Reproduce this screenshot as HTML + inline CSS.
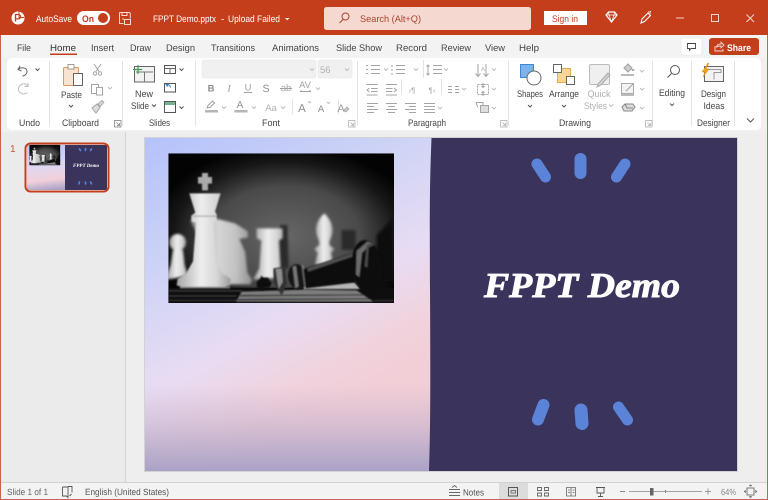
<!DOCTYPE html>
<html lang="en"><head><meta charset="utf-8"><title>FPPT Demo.pptx - PowerPoint</title>
<style>
html,body{margin:0;padding:0;width:768px;height:500px;overflow:hidden;background:#ececec}
svg{display:block;position:absolute;left:0;top:0;filter:blur(.3px)}
text{font-family:"Liberation Sans",sans-serif;font-size:9.5px;fill:#444;text-rendering:geometricPrecision}
.c{text-anchor:middle}
.g{fill:#b0b0b0}
.w{fill:#fff}
.ic{fill:none;stroke:#a5a5a5;stroke-width:1}
.dk{fill:none;stroke:#666;stroke-width:1}
.ch{fill:none;stroke:#555;stroke-width:1}
.cg{fill:none;stroke:#bdbdbd;stroke-width:1}
</style></head><body>
<svg width="768" height="500" viewBox="0 0 768 500" xmlns="http://www.w3.org/2000/svg">
<defs>
<linearGradient id="bg" gradientUnits="userSpaceOnUse" x1="145" y1="138" x2="300" y2="430">
<stop offset="0" stop-color="#b5c2fb"/><stop offset=".36" stop-color="#cdd3f6"/><stop offset=".68" stop-color="#e8dcf3"/><stop offset=".88" stop-color="#f1d2dc"/><stop offset="1" stop-color="#f2ced6"/>
</linearGradient>
<linearGradient id="bot" gradientUnits="userSpaceOnUse" x1="0" y1="385" x2="0" y2="471">
<stop offset="0" stop-color="#aaa2c7" stop-opacity="0"/><stop offset=".45" stop-color="#aaa2c7" stop-opacity=".35"/><stop offset=".8" stop-color="#aaa2c7" stop-opacity=".75"/><stop offset="1" stop-color="#aaa2c7"/>
</linearGradient>
<linearGradient id="thumb" x1=".1" y1="0" x2=".3" y2="1">
<stop offset="0" stop-color="#b7c4fb"/><stop offset=".45" stop-color="#dcd8f2"/><stop offset=".78" stop-color="#f1d0da"/><stop offset="1" stop-color="#aaa2c7"/>
</linearGradient>
<radialGradient id="vig" cx=".52" cy=".55" r=".6">
<stop offset="0" stop-color="#666"/><stop offset=".55" stop-color="#4a4a4a"/><stop offset=".82" stop-color="#171717"/><stop offset="1" stop-color="#030303"/>
</radialGradient>
<linearGradient id="wp" x1="0" x2="1" y1="0" y2="0"><stop offset="0" stop-color="#a5a5a5"/><stop offset=".45" stop-color="#eeeeee"/><stop offset=".75" stop-color="#d5d5d5"/><stop offset="1" stop-color="#9a9a9a"/></linearGradient>
<filter id="b1" x="-20%" y="-20%" width="140%" height="140%"><feGaussianBlur stdDeviation="2"/></filter>
<filter id="b2" x="-20%" y="-20%" width="140%" height="140%"><feGaussianBlur stdDeviation="4"/></filter>
<clipPath id="imgc"><rect x="25" y="25" width="677" height="449"/></clipPath>
<g id="chess">
<g clip-path="url(#imgc)">
<rect x="25" y="25" width="677" height="449" fill="url(#vig)"/>
<rect x="25" y="428" width="677" height="46" fill="#0e0e0e"/>
<g filter="url(#b2)">
<path d="M545 255h42v60h-42z" fill="#2a2a2a"/>
<path d="M650 270l50-50v190h-50z" fill="#111"/>
<path d="M360 240h22l4 130h-30z" fill="#2a2a2a"/>
</g>
<g filter="url(#b2)" fill="url(#wp)">
<circle cx="53" cy="292" r="25"/>
<path d="M39 315h30l5 45 10 32-62 12-2-12 12-32z"/>
<path d="M290 250h78v30l-12 6 6 85 14 26-96 6 18-32 6-85-14-6z"/>
<path d="M493 205c17 16 27 36 24 58-2 16-12 24-8 38l12 8v8l-8 5 8 38h-56l8-38-8-5v-8l12-8c4-14-6-22-8-38-3-22 6-42 24-58z"/>
<path d="M185 225l40 10 38 24 1 18-26 5 18 40 6 60 14 22-4 14h-80l-35-60-65-130 20-20z" opacity=".85"/>
</g>
<g filter="url(#b1)">
<path d="M440 412l140-2 20 22H430z" fill="#b5b5b5"/>
<path d="M245 440l185-6 160 2 50 34H228z" fill="#7d7d7d"/>
<path d="M240 450l370-2v3l-370 3zM232 462l400-2v3l-400 3z" fill="#1a1a1a"/>
<path d="M25 452h205v2H25zM25 465h205v2H25zM640 466h62v2h-62z" fill="#999" opacity=".55"/>
<path d="M25 436h220v3H25z" fill="#888" opacity=".5"/>
</g>
<g filter="url(#b1)">
<path d="M126 84h18v12h12v20h-12v20h-18v-20h-12v-20h12z" fill="#aaa"/>
<path d="M88 145h94l-17 55 5 8v20l-9 6 7 115 20 38 24 14-2 20-30 8H75l-25-8 3-20 24-14 22-38 9-115-14-6v-16l12-9z" fill="url(#wp)"/>
<rect x="98" y="212" width="74" height="3" fill="#999"/>
<rect x="60" y="425" width="150" height="5" fill="#8a8a8a"/>
</g>
<g>
<g filter="url(#b1)">
<path d="M290 410l10-8 4-10 6 6 14 0 6 10 6 6-8 14-14 0-6 10-8-8-10-2z" fill="#101010"/>
<path d="M340 370l36-6 5 52-16 36-12-20-12-18z" fill="#303030"/>
<path d="M347 372l18-1 3 40-12 20z" fill="#8f8f8f"/>
<ellipse cx="412" cy="395" rx="28" ry="38" transform="rotate(-10 412 395)" fill="#141414"/>
<path d="M398 365l10-3 8 62-10 6zM425 360l6-1 8 58-6 6z" fill="#777"/>
<path d="M430 372l145-48 12 88-150 18z" fill="#0a0a0a"/>
<path d="M442 370l133-44 4 8-135 46z" fill="#505050"/>
<ellipse cx="622" cy="365" rx="46" ry="80" transform="rotate(-8 622 365)" fill="#0a0a0a"/>
<path d="M590 318l32-28 14 4-30 30-8 72-10-8z" fill="#6b6b6b"/>
<path d="M620 300l16-6 6 6-16 8-4 60-8-4z" fill="#484848"/>
</g>
</g>
</g>
</g>
</defs>

<!-- window chrome -->
<rect width="768" height="500" fill="#ececec"/>
<rect width="768" height="35" fill="#c43e1c"/>
<rect y="35" width="768" height="23" fill="#f3f3f3"/>
<rect x="0" y="58" width="768" height="74" fill="#f0f0f0"/>
<rect x="7" y="58" width="754" height="72" rx="5" fill="#fff"/>

<!-- title bar -->
<circle cx="18" cy="18" r="6.5" fill="#fff"/>
<path d="M15.500 21.500v-7h2.800a2 2 0 0 1 0 4.400h-2.800" fill="none" stroke="#c43e1c" stroke-width="1.300"/>
<path d="M19 11.500v6h5" fill="none" stroke="#c43e1c" stroke-width=".9"/>
<text x="36" y="22" class="w" textLength="36" lengthAdjust="spacingAndGlyphs">AutoSave</text>
<rect x="77" y="11" width="33" height="14" rx="7" fill="#fff"/>
<text x="82" y="22" textLength="12" lengthAdjust="spacingAndGlyphs" style="font-weight:bold;fill:#c43e1c">On</text>
<circle cx="103" cy="18" r="5" fill="#c43e1c"/>
<path d="M119.500 12.500h10l.8.800v5.200M119.500 12.500v11h4M122 12.500v3h5v-3M122 19h2" fill="none" stroke="#f6d9d0" stroke-width="1"/>
<rect x="124.500" y="19.500" width="6" height="5" fill="none" stroke="#f6d9d0"/>
<text x="153" y="22" class="w" textLength="63" lengthAdjust="spacingAndGlyphs">FPPT Demo.pptx</text>
<text x="221" y="22" class="w">-</text>
<text x="228" y="22" class="w" textLength="52" lengthAdjust="spacingAndGlyphs">Upload Failed</text>
<path d="M285 18h4.500l-2.200 2.300z" fill="#fff"/>
<rect x="324" y="7" width="207" height="23" rx="2.500" fill="#f5d8d0"/>
<circle cx="345.500" cy="16.500" r="3.500" fill="none" stroke="#a8452c"/>
<path d="M343 19.500l-3.500 3.500" stroke="#a8452c" fill="none"/>
<text x="360" y="22" textLength="61" lengthAdjust="spacingAndGlyphs" style="fill:#a5452f">Search (Alt+Q)</text>
<rect x="544" y="11" width="43" height="14" fill="#fff"/>
<text x="565" y="22" class="c" textLength="26" lengthAdjust="spacingAndGlyphs" style="fill:#c43e1c">Sign in</text>
<path d="M606 15l2.500-3h6l2.500 3-5.500 7z" fill="none" stroke="#fff" stroke-width="1.200"/>
<path d="M606 15h11M609 15l2.500 7 2.500-7M608.500 12l.5 3M614.500 12l-.5 3" fill="none" stroke="#fff" stroke-width=".7"/>
<path d="M641 23l1-4 6-6 2.500 2.500-6 6z" fill="none" stroke="#fff" stroke-width="1.100"/>
<path d="M649 11v2M651 13h-1.500M651 11l-1 1" stroke="#fff" stroke-width=".8"/>
<path d="M676 18h8" stroke="#f5cfc4" stroke-width="1"/>
<rect x="711.500" y="14.500" width="7" height="7" fill="none" stroke="#f5d5cc"/>
<path d="M746.500 14.500l7.500 7.500M754 14.500l-7.500 7.500" stroke="#f5d5cc" stroke-width="1" fill="none"/>

<!-- tabs -->
<text x="17" y="51" textLength="14" lengthAdjust="spacingAndGlyphs">File</text>
<text x="50" y="51" textLength="26" lengthAdjust="spacingAndGlyphs" style="fill:#333">Home</text>
<rect x="50" y="53.500" width="27" height="1.500" fill="#c43e1c"/>
<text x="91" y="51" textLength="23" lengthAdjust="spacingAndGlyphs">Insert</text>
<text x="130" y="51" textLength="21" lengthAdjust="spacingAndGlyphs">Draw</text>
<text x="166" y="51" textLength="29" lengthAdjust="spacingAndGlyphs">Design</text>
<text x="211" y="51" textLength="44" lengthAdjust="spacingAndGlyphs">Transitions</text>
<text x="272" y="51" textLength="47" lengthAdjust="spacingAndGlyphs">Animations</text>
<text x="336" y="51" textLength="46" lengthAdjust="spacingAndGlyphs">Slide Show</text>
<text x="396" y="51" textLength="31" lengthAdjust="spacingAndGlyphs">Record</text>
<text x="441" y="51" textLength="30" lengthAdjust="spacingAndGlyphs">Review</text>
<text x="485" y="51" textLength="20" lengthAdjust="spacingAndGlyphs">View</text>
<text x="519" y="51" textLength="20" lengthAdjust="spacingAndGlyphs">Help</text>
<rect x="681" y="38" width="21" height="17" rx="2" fill="#fff" stroke="#e3e3e3" stroke-width=".6"/>
<path d="M687.500 43.500h8v5h-4.500l-1.500 1.800v-1.800h-2z" fill="none" stroke="#444" stroke-width=".9"/>
<rect x="709" y="38" width="50" height="17" rx="3" fill="#c43e1c"/>
<path d="M715 46v5h8v-2M716.500 47c.5-2 2-3 4.500-3v-1.800l3 2.800-3 2.800v-1.800c-2 0-3.500 .3-4.500 1z" fill="none" stroke="#f7d9d1" stroke-width=".9"/>
<text x="727" y="51" class="w" textLength="24" lengthAdjust="spacingAndGlyphs" style="font-weight:bold">Share</text>

<!-- ribbon separators -->
<g stroke="#e3e3e3" stroke-width="1">
<path d="M49.500 61v65M122.500 61v65M195.500 61v65M357.500 61v65M508.500 61v65M652.500 61v65M691.500 61v65M734.500 61v65"/>
<path d="M292.500 99v15M338.500 99v15M423.500 60v18M401.500 79v15M441.500 79v15"/>
</g>

<!-- undo group -->
<path d="M20 66l-2 3.500 3.500 1.500M18.500 69.300c2-2 8-2.500 8.500 1.800.3 2.700-1.800 4.400-4.500 5" class="dk"/>
<path d="M35.500 68.500l2 2 2-2" class="ch"/>
<path d="M28 83v3.500h-3.500M27.500 85.500c-3-3.500-9-1-9 3.500s5.500 6.500 9 3.500" class="cg"/>
<text x="29.500" y="126" class="c" textLength="21" lengthAdjust="spacingAndGlyphs">Undo</text>

<!-- clipboard -->
<rect x="63.500" y="67.500" width="15" height="18" rx="1" fill="#f7e3cf" stroke="#d99a5c"/>
<rect x="68" y="64.500" width="6" height="4.500" fill="#fff" stroke="#888" stroke-width=".8"/>
<rect x="73.500" y="73.500" width="9" height="12" fill="#fff" stroke="#666"/>
<text x="71.500" y="98" class="c" textLength="21" lengthAdjust="spacingAndGlyphs">Paste</text>
<path d="M69 105l2 2 2-2" class="ch"/>
<path d="M94 64l5 7.500M101 64l-5 7.500" class="ic"/><circle cx="95" cy="73.500" r="1.700" class="ic"/><circle cx="100" cy="73.500" r="1.700" class="ic"/>
<rect x="91.500" y="84.500" width="7" height="9" class="ic"/><rect x="96.500" y="87.500" width="6" height="7.500" fill="#fff" stroke="#a5a5a5"/>
<path d="M108 87l2 2 2-2" class="cg"/>
<path d="M92 108l5-4 3 3.500-4 5.500zM98 104l4-3.500 1.800 1.800-3.500 4z" fill="#ddd" stroke="#a5a5a5"/>
<text x="80.500" y="126" class="c" textLength="37" lengthAdjust="spacingAndGlyphs">Clipboard</text>
<path d="M114.500 120.500h6.500v6.500h-6.500zM116.500 122.500l3 3M119.500 123v2.500h-2.500" fill="none" stroke="#777" stroke-width=".7"/>

<!-- slides -->
<rect x="134.500" y="66.500" width="20" height="15.500" fill="#f2f2f2" stroke="#666"/>
<path d="M136 72h17M144.500 72v10" stroke="#777" fill="none"/>
<path d="M138 65v9M133 69.500h9" stroke="#3d9b55" stroke-width="1.200"/>
<text x="144" y="97" class="c" textLength="18" lengthAdjust="spacingAndGlyphs">New</text>
<text x="140" y="109" class="c" textLength="18" lengthAdjust="spacingAndGlyphs">Slide</text>
<path d="M152 104.500l2 2 2-2" class="ch"/>
<rect x="164.500" y="65.500" width="11" height="8" fill="#fff" stroke="#555"/><path d="M165 68.500h10M170 68.500v5" stroke="#666"/>
<path d="M179.500 68.500l2 2 2-2" class="ch"/>
<rect x="164.500" y="83.500" width="11" height="8.500" fill="#fff" stroke="#555"/><path d="M166 85c2-1 4 0 4.500 2.500" stroke="#2b78c5" fill="none"/><path d="M165 83.500l2.500 3.500 1-3z" fill="#2b78c5"/>
<rect x="164.500" y="101.500" width="11" height="11" fill="#fff" stroke="#555"/><rect x="165" y="102" width="10" height="3" fill="#74b58c"/>
<path d="M179.500 106.500l2 2 2-2" class="ch"/>
<text x="159.500" y="126" class="c" textLength="21" lengthAdjust="spacingAndGlyphs">Slides</text>

<!-- font -->
<rect x="202" y="60" width="114" height="18" rx="2" fill="#f0f0f0" stroke="#e6e6e6" stroke-width=".6"/>
<path d="M310 68.500l2 2 2-2" class="cg"/>
<rect x="318" y="60" width="34" height="18" rx="2" fill="#f0f0f0" stroke="#e6e6e6" stroke-width=".6"/>
<text x="320" y="73" class="g">56</text>
<path d="M345 68.500l2 2 2-2" class="cg"/>
<text x="211" y="91.500" class="c" style="font-weight:bold;fill:#8d8d8d">B</text>
<text x="229" y="91.500" class="c" style="font-family:'Liberation Serif',serif;font-style:italic;fill:#999;font-size:10px">I</text>
<text x="248" y="90.500" class="c" style="fill:#a0a0a0">U</text><path d="M244 92.500h8" stroke="#a0a0a0"/>
<text x="266" y="92" class="c" style="fill:#8d8d8d;font-size:10.500px">S</text>
<text x="286" y="91" class="c" style="fill:#aaa">ab</text><path d="M280 88.500h12" stroke="#a0a0a0"/>
<text x="305" y="88" class="c" style="fill:#a0a0a0">AV</text><path d="M300 91.500h11M300 91.500l1.500-1M311 91.500l-1.500-1" stroke="#a0a0a0" fill="none"/>
<path d="M316 87.500l2 2 2-2" class="cg"/>
<path d="M207 108l1-2.500 4.500-4.500 2 2-4.500 4.500z" fill="none" stroke="#a0a0a0"/><rect x="205" y="110" width="13" height="2.500" fill="#b5b5b5"/>
<path d="M222 106.500l2 2 2-2" class="cg"/>
<text x="240" y="108" class="c" style="fill:#8d8d8d;font-size:10px">A</text><rect x="234.500" y="110" width="13" height="2.500" fill="#b5b5b5"/>
<path d="M252 106.500l2 2 2-2" class="cg"/>
<text x="271" y="111" class="c g">Aa</text>
<path d="M281 106.500l2 2 2-2" class="cg"/>
<text x="302" y="112" class="c" style="fill:#8d8d8d;font-size:11.500px">A</text><path d="M308 103l1.500-1.500 1.500 1.500" class="cg"/>
<text x="321" y="112" class="c" style="fill:#8d8d8d">A</text><path d="M327 102l1.500 1.500 1.500-1.500" class="cg"/>
<text x="341" y="112" class="c" style="fill:#a0a0a0;font-size:11px">A</text><path d="M344 110l3-3 2 2-3 3z" fill="#ccc" stroke="#a0a0a0" stroke-width=".7"/>
<text x="271" y="126" class="c" textLength="18" lengthAdjust="spacingAndGlyphs">Font</text>
<path d="M348.500 120.500h6.500v6.500h-6.500zM350.500 122.500l3 3M353.500 123v2.500h-2.500" fill="none" stroke="#aaa" stroke-width=".7"/>

<!-- paragraph -->
<g class="ic">
<path d="M371 65.500h9M371 69.500h9M371 73.500h9M366 65.500h2M366 69.500h2M366 73.500h2"/>
<path d="M391 66h2M391 70h2M391 74h2M396 65.500h9M396 69.500h9M396 73.500h9"/>
<path d="M428 65v10M426.500 66.500l1.500-1.500 1.500 1.500M426.500 73.500l1.500 1.500 1.500-1.500M433 65.500h9M433 69.500h9M433 73.500h9"/>
<path d="M366.500 84.500h11M371 88.500h6.500M371 91.500h6.500M366.500 95h11M369.500 88l-2.500 2 2.500 2"/>
<path d="M386 84.500h11M386 88.500h6.500M386 91.500h6.500M386 95h11M394 88l2.500 2-2.500 2"/>
<path d="M448 86.500h4M448 89.500h4M448 92.500h4M455 86.500h4M455 89.500h4M455 92.500h4"/>
<path d="M367 103.500h11M367 106.500h7M367 109.500h11M367 112.500h7"/>
<path d="M386 103.500h11M388 106.500h7M386 109.500h11M388 112.500h7"/>
<path d="M405 103.500h11M409 106.500h7M405 109.500h11M409 112.500h7"/>
<path d="M424 103.500h11M424 106.500h11M424 109.500h11M424 112.500h11"/>
<path d="M478 64v12M475.500 73.500l2.500 3 2.500-3M486 64v12M483.500 73.500l2.500 3 2.500-3"/>
<rect x="477.500" y="84.500" width="11" height="10" stroke-dasharray="2 1"/>
<path d="M483 83v4M483 92v4M481.500 86l1.500 1.500 1.500-1.500M481.500 93l1.500-1.500 1.500 1.500"/>
<rect x="480.500" y="105.500" width="8" height="7" fill="#ddd"/>
<path d="M476 102.500h7v3M476 102.500l2 5"/>
</g>
<text x="483" y="71" class="c" style="fill:#aaa;font-size:6px">A</text>
<text x="412" y="93" class="c" style="fill:#aaa;font-size:8px">›¶</text>
<text x="432" y="93" class="c" style="fill:#aaa;font-size:8px">¶‹</text>
<g class="cg">
<path d="M384 68.500l2 2 2-2"/><path d="M414 68.500l2 2 2-2"/><path d="M444 68.500l2 2 2-2"/><path d="M492 68.500l2 2 2-2"/><path d="M462 88l2 2 2-2"/><path d="M492 88l2 2 2-2"/><path d="M438 107l2 2 2-2"/><path d="M492 107l2 2 2-2"/>
</g>
<text x="427" y="126" class="c" textLength="38" lengthAdjust="spacingAndGlyphs">Paragraph</text>
<path d="M500.500 120.500h6.500v6.500h-6.500zM502.500 122.500l3 3M505.500 123v2.500h-2.500" fill="none" stroke="#aaa" stroke-width=".7"/>

<!-- drawing -->
<rect x="520.500" y="64.500" width="13" height="13" fill="#7fb2ec" stroke="#3f86d4"/>
<circle cx="534" cy="78" r="7" fill="#fff" stroke="#666"/>
<text x="530" y="97" class="c" textLength="26" lengthAdjust="spacingAndGlyphs">Shapes</text>
<path d="M528 105l2 2 2-2" class="ch"/>
<rect x="557.500" y="68.500" width="13" height="14" fill="#f9d693" stroke="#e8a84a"/>
<rect x="553.500" y="64.500" width="8" height="8" fill="#fff" stroke="#666"/>
<rect x="566.500" y="76.500" width="8" height="8" fill="#fff" stroke="#666"/>
<text x="564" y="97" class="c" textLength="30" lengthAdjust="spacingAndGlyphs">Arrange</text>
<path d="M562 105l2 2 2-2" class="ch"/>
<rect x="589.500" y="64.500" width="20" height="20" rx="1.500" fill="#efefef" stroke="#bbb"/>
<path d="M598 84l10-11 2 2-9 10-4 2z" fill="#d4d4d4" stroke="#aaa"/>
<text x="599" y="97" class="c g" textLength="23" lengthAdjust="spacingAndGlyphs">Quick</text>
<text x="595.500" y="109" class="c g" textLength="23" lengthAdjust="spacingAndGlyphs">Styles</text>
<path d="M609 104.500l2 2 2-2" class="cg"/>
<path d="M624 68l4-4 4 4-4 4zM634 69c0 2-2 2-2 0" fill="#ccc" stroke="#a0a0a0"/><rect x="621" y="74" width="13" height="2" fill="#bbb"/>
<path d="M640 70l2 2 2-2" class="cg"/>
<rect x="621.500" y="83.500" width="12" height="10" fill="#f3f3f3" stroke="#aaa"/><path d="M626 91l7-7" stroke="#a0a0a0"/><rect x="621" y="94" width="13" height="2" fill="#bbb"/>
<path d="M640 88l2 2 2-2" class="cg"/>
<path d="M622 107l3-3h8l2 3-3 4h-8z" fill="#ddd" stroke="#888"/><path d="M625 104l2 4h6" stroke="#888" fill="none"/>
<path d="M640 107l2 2 2-2" class="cg"/>
<text x="575" y="126" class="c" textLength="32" lengthAdjust="spacingAndGlyphs">Drawing</text>
<path d="M645.500 120.500h6.500v6.500h-6.500zM647.500 122.500l3 3M650.500 123v2.500h-2.500" fill="none" stroke="#aaa" stroke-width=".7"/>

<!-- editing -->
<circle cx="675" cy="70" r="4.500" fill="none" stroke="#555"/>
<path d="M671.500 73.500l-4 4" stroke="#555" fill="none"/>
<text x="672" y="96" class="c" textLength="26" lengthAdjust="spacingAndGlyphs">Editing</text>
<path d="M670 103.500l2 2 2-2" class="ch"/>

<!-- designer -->
<rect x="704.500" y="66.500" width="19" height="15" fill="#f3f3f3" stroke="#666"/>
<path d="M707 69.500h14v3h-7v7" fill="none" stroke="#999"/>
<path d="M708 63l-6 9h3l-2 5 6-8h-3l3-6z" fill="#f0a323" stroke="#e08c10" stroke-width=".5"/>
<text x="713.500" y="97" class="c" textLength="25" lengthAdjust="spacingAndGlyphs">Design</text>
<text x="714" y="109" class="c" textLength="21" lengthAdjust="spacingAndGlyphs">Ideas</text>
<text x="713.500" y="126" class="c" textLength="33" lengthAdjust="spacingAndGlyphs">Designer</text>
<path d="M747 118.500l3.500 3.500 3.500-3.500" class="ch"/>

<!-- panes -->
<rect x="0" y="132" width="125" height="351" fill="#ebebeb"/>
<rect x="125" y="132" width="1" height="351" fill="#d4d4d4"/>
<rect x="126" y="132" width="642" height="351" fill="#eeeeee"/>

<!-- thumbnail -->
<text x="10" y="152" style="font-size:10px;fill:#c9573a">1</text>
<rect x="25.500" y="143.500" width="83" height="48" rx="5" fill="#fff"/>
<rect x="27" y="145" width="80" height="45" fill="url(#thumb)"/>
<rect x="65" y="145" width="42" height="45" fill="#3a345c"/>
<use href="#chess" transform="translate(28.200 143.600) scale(.0457)"/>
<text x="86" y="167" class="c" textLength="26" lengthAdjust="spacingAndGlyphs" style="font-family:'Liberation Serif',serif;font-weight:bold;font-style:italic;font-size:5px;fill:#fff">FPPT Demo</text>
<g stroke="#5b84d9" stroke-width="1.600" stroke-linecap="round" fill="none">
<path d="M79.500 149l1 1.500M85.500 148.500v2M91.500 149l-1 1.500M79.500 182l-.7 1.800M85.500 182v2M90.500 182l1 1.800"/>
</g>
<rect x="25.500" y="143.500" width="83" height="48" rx="5" fill="none" stroke="#c43e1c" stroke-width="2"/>

<!-- slide -->
<rect x="144.500" y="137.500" width="593" height="334" fill="none" stroke="#d2d2d2"/>
<rect x="145" y="138" width="592" height="333" fill="url(#bg)"/>
<rect x="145" y="385" width="592" height="86" fill="url(#bot)"/>
<path d="M431.500 138c-1.500 40 -2 60 -1.500 150s.5 140 -1 183H737V138z" fill="#3a345c"/>
<use href="#chess" transform="translate(160 145) scale(.33333)"/>
<g stroke="#5b84d9" stroke-linecap="round" fill="none">
<path d="M537 164l8.500 13" stroke-width="11"/>
<path d="M580.500 159v14" stroke-width="12"/>
<path d="M625 164l-8.500 13" stroke-width="11"/>
<path d="M543.500 405l-5.500 14.500" stroke-width="12"/>
<path d="M581 410l1 13.500" stroke-width="13"/>
<path d="M618.500 407l9 13" stroke-width="11"/>
</g>
<text x="484" y="297" textLength="196" lengthAdjust="spacingAndGlyphs" style="font-family:'Liberation Serif',serif;font-weight:bold;font-style:italic;font-size:35px;fill:#fff;stroke:#fff;stroke-width:.9px">FPPT Demo</text>

<!-- status bar -->
<rect x="0" y="482" width="768" height="1" fill="#d2d2d2"/>
<rect x="0" y="483" width="768" height="16" fill="#f3f3f3"/>
<text x="7" y="495" textLength="41" lengthAdjust="spacingAndGlyphs" style="font-size:9px;fill:#666">Slide 1 of 1</text>
<path d="M62.500 487v9h4l1.500 1.500v-10.500h-5.500M68 486.500h4v6M71.500 494l-2 2" fill="none" stroke="#555" stroke-width=".9"/>
<text x="85" y="495" textLength="84" lengthAdjust="spacingAndGlyphs" style="font-size:9px;fill:#555">English (United States)</text>
<path d="M449 489.500h11M449 492.500h11M449 495.500h11M452 487.500l2.500-2 2.500 2" fill="none" stroke="#666" stroke-width=".9"/>
<text x="463" y="495.500" textLength="21" lengthAdjust="spacingAndGlyphs" style="font-size:9px;fill:#555">Notes</text>
<rect x="499" y="483" width="29" height="16" fill="#dcdcdc"/>
<rect x="508.500" y="487.500" width="9" height="8.500" fill="none" stroke="#555"/>
<path d="M511 490.500h4.500v2.500h-4.500z" fill="none" stroke="#555" stroke-width=".7"/>
<path d="M537.500 487.500h4v3h-4zM544.500 487.500h4v3h-4zM537.500 493h4v3h-4zM544.500 493h4v3h-4z" fill="none" stroke="#666" stroke-width=".9"/>
<path d="M566.500 487.500h4.500v8.500h-4.500zM571 487.500h4.500v8.500H571zM568 490h2M568 492.500h2M572.500 490h2M572.500 492.500h2" fill="none" stroke="#666" stroke-width=".8"/>
<path d="M596 487.500h9M597 487.500v5.500h7v-5.500M600.500 493v3M598 496.500h5" fill="none" stroke="#555" stroke-width=".9"/>
<path d="M620 491.500h5" stroke="#888"/>
<path d="M629 491.500h73" stroke="#888" stroke-width=".8"/>
<rect x="650" y="488" width="3.500" height="7.500" fill="#666"/>
<path d="M665.500 490v3" stroke="#888"/>
<path d="M705 491.500h6M708 488.500v6" stroke="#999"/>
<text x="721" y="495" textLength="15" lengthAdjust="spacingAndGlyphs" style="font-size:9px;fill:#888">64%</text>
<rect x="747" y="488" width="7" height="7" fill="none" stroke="#777"/>
<path d="M750.500 484.500l-1.500 1.500h3zM750.500 498l-1.500-1.500h3zM744 491.500l1.500-1.500v3zM757 491.500l-1.500-1.500v3z" fill="#666" stroke="#777" stroke-width=".5"/>

<!-- window border -->
<rect x="0" y="499" width="768" height="1" fill="#c8644a"/>
<rect x="0" y="35" width="1" height="465" fill="#c8644a"/>
<rect x="767" y="35" width="1" height="465" fill="#c8644a"/>
</svg>
</body></html>
